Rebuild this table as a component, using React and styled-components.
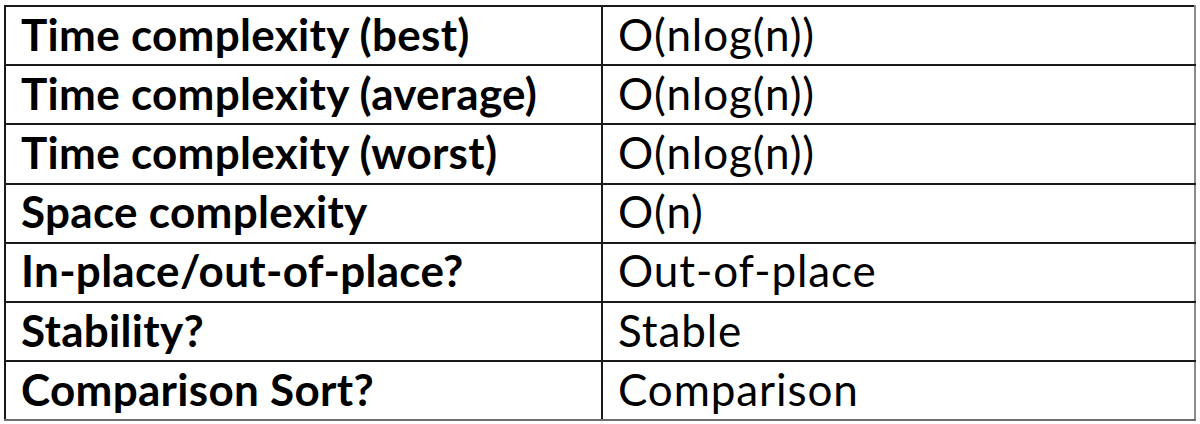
import React from 'react'
import styled, { createGlobalStyle } from 'styled-components'

const GlobalStyle = createGlobalStyle`
  html, body {
    margin: 0;
    padding: 0;
    background: #ffffff;
  }
`

const Page = styled.div`
  padding: 5px 5px 0 4px;
`

const Table = styled.table`
  width: 1192px;
  border-collapse: collapse;
  table-layout: fixed;
  font-family: Lato, "Liberation Sans", sans-serif;
  color: #000;
`

const LabelCol = styled.col`
  width: 597px;
`

const Row = styled.tr`
  height: 59.2px;
`

const Cell = styled.td`
  border: 2px solid #1a1a1a;
  padding: 0 0 4px 15px;
  font-size: 44px;
  font-weight: ${p => (p.$bold ? 700 : 400)};
  letter-spacing: ${p => (p.$bold ? '0.3px' : '0.9px')};
  white-space: nowrap;
  line-height: 1;
  &:last-child {
    border-right-color: #8c8c8c;
  }
  tr:last-child > & {
    border-bottom-color: #6e6e6e;
  }
`

const rows = [
  ['Time complexity (best)', 'O(nlog(n))'],
  ['Time complexity (average)', 'O(nlog(n))'],
  ['Time complexity (worst)', 'O(nlog(n))'],
  ['Space complexity', 'O(n)'],
  ['In-place/out-of-place?', 'Out-of-place'],
  ['Stability?', 'Stable'],
  ['Comparison Sort?', 'Comparison'],
]

export default function App() {
  return (
    <Page>
      <GlobalStyle />
      <Table>
        <colgroup>
          <LabelCol />
          <col />
        </colgroup>
        <tbody>
          {rows.map(([label, value]) => (
            <Row key={label}>
              <Cell $bold>{label}</Cell>
              <Cell>{value}</Cell>
            </Row>
          ))}
        </tbody>
      </Table>
    </Page>
  )
}
